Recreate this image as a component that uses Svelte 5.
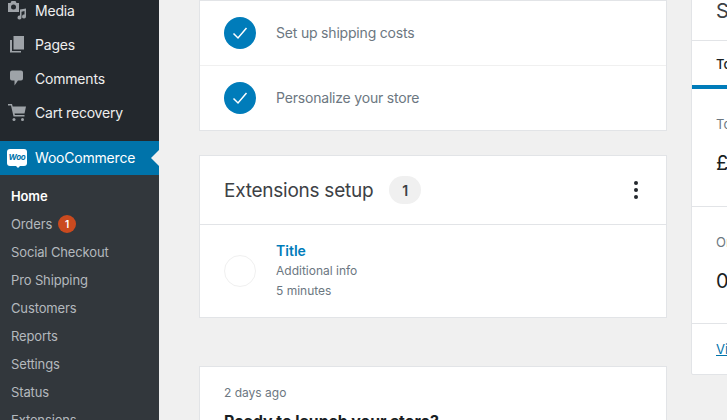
<script>
  const topItems = [
    { label: 'Media', icon: 'media' },
    { label: 'Pages', icon: 'pages' },
    { label: 'Comments', icon: 'comments' },
    { label: 'Cart recovery', icon: 'cart' }
  ];
  const subItems = ['Orders', 'Social Checkout', 'Pro Shipping', 'Customers', 'Reports', 'Settings', 'Status', 'Extensions'];
  const tasks = ['Set up shipping costs', 'Personalize your store'];
</script>

<div class="page">
  <nav class="sidebar">
    <ul class="top">
      {#each topItems as item}
        <li>
          <span class="ico">
            {#if item.icon === 'media'}
              <svg width="20" height="20" viewBox="0 0 20 20"><path d="M1 3h2.500l1-2h4l1 2H12v9H1z" /><circle cx="6.500" cy="7" r="2.500" fill="#23282d" /><path d="M19 8.500v8a2 2 0 1 1-1.500-1.900V11l-3 .8v5.700a2 2 0 1 1-1.500-1.900v-6z" /></svg>
            {:else if item.icon === 'pages'}
              <svg width="20" height="20" viewBox="0 0 20 20"><path d="M6.500 2H17v13.500H6.500z" /><path d="M3 6h2v11h9v1.500H3z" /></svg>
            {:else if item.icon === 'comments'}
              <svg width="20" height="20" viewBox="0 0 20 20"><path d="M5 2.500h9a2 2 0 0 1 2 2v6a2 2 0 0 1-2 2h-3l-3.500 5v-5H5a2 2 0 0 1-2-2v-6a2 2 0 0 1 2-2z" /></svg>
            {:else}
              <svg width="20" height="20" viewBox="0 0 20 20"><path d="M1 2h4l.7 2.500H19l-1.500 7H7.500l.4 1.500H17.500v1.500H6.500L4 3.500H1z" /><circle cx="7" cy="17.500" r="1.500" /><circle cx="15.500" cy="17.500" r="1.500" /></svg>
            {/if}
          </span>
          <span>{item.label}</span>
        </li>
      {/each}
    </ul>
    <div class="woo">
      <span class="woo-logo"><span>Woo</span></span>
      <span>WooCommerce</span>
      <span class="arrow"></span>
    </div>
    <ul class="sub">
      <li class="current">Home</li>
      {#each subItems as item}
        <li>
          {item}
          {#if item === 'Orders'}<span class="badge">1</span>{/if}
        </li>
      {/each}
    </ul>
  </nav>

  <main class="main">
    <div class="column">
      <section class="card tasks">
        {#each tasks as task}
          <div class="task">
            <span class="check">
              <svg width="32" height="32" viewBox="0 0 32 32"><path d="M9.500 16.500l4.500 4.500 8.500-10" fill="none" stroke="#fff" stroke-width="1.500" /></svg>
            </span>
            <span class="task-label">{task}</span>
          </div>
        {/each}
      </section>

      <section class="card ext">
        <header class="ext-head">
          <h2>Extensions setup</h2>
          <span class="pill">1</span>
          <span class="dots"><i></i><i></i><i></i></span>
        </header>
        <div class="ext-row">
          <span class="ring"></span>
          <div class="ext-text">
            <a href="#title">Title</a>
            <p>Additional info</p>
            <p>5 minutes</p>
          </div>
        </div>
      </section>

      <section class="card note">
        <p class="when">2 days ago</p>
        <h3>Ready to launch your store?</h3>
      </section>
    </div>

    <aside class="card stats">
      <h2>Stats overview</h2>
      <div class="tabs"><span>Today</span></div>
      <div class="stat first">
        <p class="k">Total sales</p>
        <p class="v">£0.00</p>
      </div>
      <div class="stat second">
        <p class="k">Orders</p>
        <p class="v">0</p>
      </div>
      <div class="foot"><a href="#view">View detailed stats</a></div>
    </aside>
  </main>
</div>

<style>
  :global(body) { margin: 0; background: #f0f0f0; }
  .page {
    width: 727px;
    height: 420px;
    overflow: hidden;
    display: flex;
    font-family: Inter, "Liberation Sans", sans-serif;
    background: #f0f0f0;
  }
  ul { list-style: none; margin: 0; padding: 0; }
  p, h2, h3 { margin: 0; }
  .sidebar {
    width: 159px;
    height: 420px;
    flex: none;
    background: #23282d;
    color: #eee;
    font-size: 14px;
    letter-spacing: -0.2px;
  }
  .top { margin-top: -7px; }
  .top li {
    height: 34px;
    display: flex;
    align-items: center;
    gap: 8px;
    padding-left: 7px;
    color: #eee;
  }
  .ico { width: 20px; height: 20px; display: block; }
  .ico svg { display: block; fill: #9ea3a8; }
  .woo {
    margin-top: 12px;
    height: 34px;
    box-sizing: border-box;
    padding: 0 0 2px 7px;
    background: #0073aa;
    color: #fff;
    display: flex;
    align-items: center;
    gap: 8px;
    position: relative;
  }
  .woo-logo {
    width: 20px;
    height: 17px;
    background: #fff;
    border-radius: 3px;
    color: #0073aa;
    font-size: 8px;
    font-weight: 700;
    font-style: italic;
    display: flex;
    align-items: center;
    justify-content: center;
    position: relative;
  }
  .woo-logo::after {
    content: "";
    position: absolute;
    left: 9px;
    bottom: -2px;
    border: 2px solid transparent;
    border-top-color: #fff;
    border-bottom-width: 0;
  }
  .woo-logo span { letter-spacing: -0.3px; }
  .arrow {
    position: absolute;
    right: 0;
    top: 9px;
    border: 8px solid transparent;
    border-right-color: #f0f0f0;
    border-left-width: 0;
  }
  .sub {
    background: #32373c;
    padding-top: 7px;
    height: 300px;
    font-size: 13px;
    color: #b4b9be;
    letter-spacing: -0.13px;
  }
  .sub li {
    height: 28px;
    display: flex;
    align-items: center;
    gap: 6px;
    padding-left: 11px;
  }
  .sub .current { color: #fff; font-weight: 600; }
  .badge {
    width: 18px;
    height: 18px;
    border-radius: 50%;
    background: #ca4a1f;
    color: #fff;
    font-size: 10px;
    font-weight: 600;
    display: flex;
    align-items: center;
    justify-content: center;
  }
  .main {
    flex: 1;
    display: flex;
    gap: 24px;
    padding-left: 40px;
    align-items: flex-start;
    min-width: 0;
  }
  .column { width: 468px; flex: none; }
  .card {
    background: #fff;
    border: 1px solid #e2e4e7;
    box-sizing: border-box;
  }
  .tasks { height: 131px; }
  .task {
    height: 64px;
    display: flex;
    align-items: center;
    gap: 20px;
    padding-left: 24px;
    box-sizing: content-box;
  }
  .task + .task { border-top: 1px solid #f0f0f0; }
  .check {
    width: 32px;
    height: 32px;
    border-radius: 50%;
    background: #007cba;
    display: block;
  }
  .check svg { display: block; }
  .task-label { font-size: 14px; letter-spacing: -0.19px; color: #6c7781; margin-bottom: 2px; }
  .ext { margin-top: 24px; height: 163px; }
  .ext-head {
    height: 68px;
    display: flex;
    align-items: center;
    padding-left: 24px;
    border-bottom: 1px solid #e2e4e7;
    box-sizing: content-box;
  }
  .ext-head h2 { font-size: 19px; letter-spacing: -0.25px; font-weight: 400; color: #3d4145; }
  .pill {
    margin-left: 16px;
    width: 32px;
    height: 28px;
    border-radius: 14px;
    background: #f0f0f0;
    color: #3d4145;
    font-size: 14px;
    font-weight: 600;
    display: flex;
    align-items: center;
    justify-content: center;
  }
  .dots {
    margin-left: auto;
    margin-right: 28px;
    display: flex;
    flex-direction: column;
    gap: 3px;
  }
  .dots i { width: 4px; height: 4px; border-radius: 50%; background: #23282d; display: block; }
  .ext-row {
    display: flex;
    align-items: center;
    gap: 20px;
    padding: 16px 0 0 24px;
  }
  .ring {
    width: 30px;
    height: 30px;
    border: 1px solid #f0f0f0;
    border-radius: 50%;
    display: block;
  }
  .ext-text a {
    display: block;
    color: #007cba;
    font-size: 14px;
    font-weight: 600;
    text-decoration: none;
    line-height: 20px;
  }
  .ext-text p { font-size: 12px; color: #6c7781; line-height: 20px; }
  .note { margin-top: 48px; height: 120px; padding: 17px 24px; }
  .when { font-size: 12px; color: #6c7781; line-height: 18px; }
  .note h3 { margin-top: 10px; font-size: 15.800px; font-weight: 700; color: #191e23; white-space: nowrap; }
  .stats {
    width: 300px;
    flex: none;
    margin-top: -20px;
    height: 395px;
    white-space: nowrap;
    border-radius: 0 0 0 2px;
  }
  .stats h2 {
    height: 60px;
    padding: 18px 24px 0;
    box-sizing: border-box;
    font-size: 20px;
    font-weight: 400;
    color: #3d4145;
    border-bottom: 1px solid #e2e4e7;
  }
  .tabs {
    height: 48px;
    box-sizing: border-box;
    padding: 15px 24px 0;
    font-size: 13px;
    font-weight: 500;
    color: #191e23;
    border-bottom: 4px solid #007cba;
  }
  .stat { padding: 0 24px; box-sizing: border-box; border-bottom: 1px solid #e2e4e7; }
  .first { height: 118px; padding-top: 26px; }
  .second { height: 117px; padding-top: 26px; }
  .k { font-size: 13px; line-height: 18px; color: #6c7781; }
  .v { margin-top: 16px; font-size: 20px; line-height: 28px; color: #191e23; }
  .foot { padding: 16px 24px; font-size: 13px; line-height: 18px; }
  .foot a { color: #0073aa; }
</style>
